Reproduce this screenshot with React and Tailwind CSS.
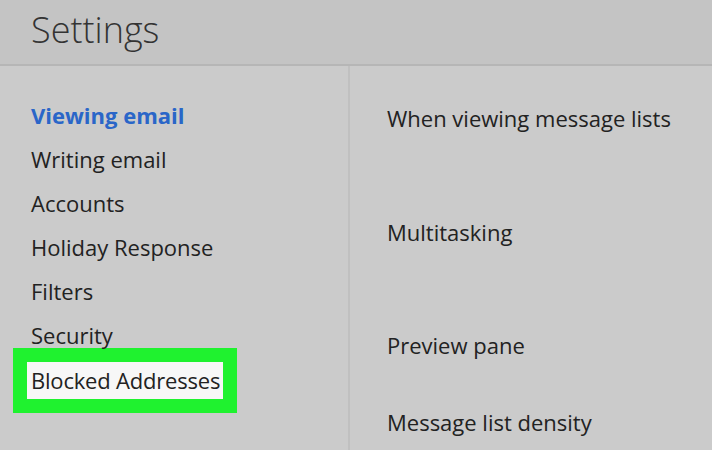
export default function App() {
  const items = ["Writing email", "Accounts", "Holiday Response", "Filters", "Security"];
  return (
    <div className="w-[712px] h-[450px] overflow-hidden bg-[#cbcbcb] text-[#222]" style={{ fontFamily: '"Open Sans", "Noto Sans", sans-serif' }}>
      <div className="h-[66px] bg-[#c4c4c4] border-b-2 border-[#b6b6b6] flex items-center pl-[31px]">
        <span className="text-[36px] font-light leading-none text-[#333] mt-[-5px]">Settings</span>
      </div>
      <div className="flex h-[384px]">
        <div className="w-[350px] border-r-2 border-[#c0c0c0] pt-[27px]">
          <div className="pl-[31px] h-[44px] flex items-center text-[22px] font-bold text-[#2a66c8]">Viewing email</div>
          {items.map((t) => (
            <div key={t} className="pl-[31px] h-[44px] flex items-center text-[22px] whitespace-nowrap">{t}</div>
          ))}
          <div className="ml-[13px] w-[224px] h-[65px] bg-[#1ff22f] p-[14px] mt-[-9px]">
            <div className="bg-[#f7f7f7] h-full flex items-center pl-[4px] text-[22px] whitespace-nowrap tracking-[-0.2px]">Blocked Addresses</div>
          </div>
        </div>
        <div className="flex-1 pl-[37px] pt-[37px] text-[22px] leading-[30px] whitespace-nowrap">
          <div className="h-[114px]">When viewing message lists</div>
          <div className="h-[113px]">Multitasking</div>
          <div className="h-[77px]">Preview pane</div>
          <div>Message list density</div>
        </div>
      </div>
    </div>
  );
}
